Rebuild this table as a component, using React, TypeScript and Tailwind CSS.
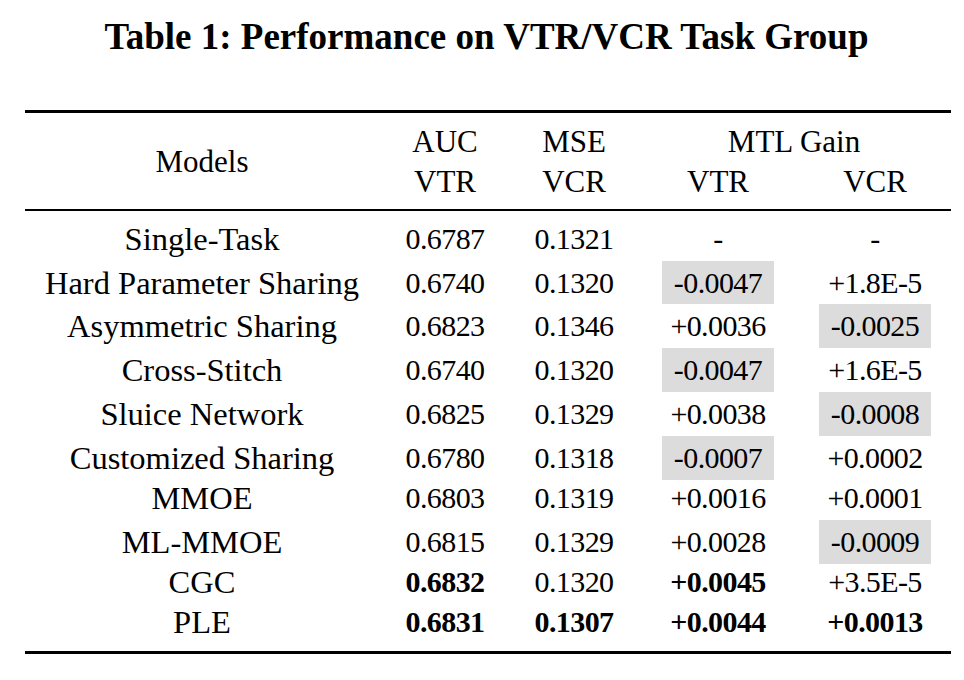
import React from "react";

type Row = {
  name: string;
  vals: string[];
  bold?: boolean[];
  shade?: boolean[];
  cls: string;
};

const rows: Row[] = [
  { name: "Single-Task", vals: ["0.6787", "0.1321", "-", "-"], cls: "h-[50px] pt-[6px]" },
  { name: "Hard Parameter Sharing", vals: ["0.6740", "0.1320", "-0.0047", "+1.8E-5"], shade: [false, false, true, false], cls: "h-[43px]" },
  { name: "Asymmetric Sharing", vals: ["0.6823", "0.1346", "+0.0036", "-0.0025"], shade: [false, false, false, true], cls: "h-[44px]" },
  { name: "Cross-Stitch", vals: ["0.6740", "0.1320", "-0.0047", "+1.6E-5"], shade: [false, false, true, false], cls: "h-[44px]" },
  { name: "Sluice Network", vals: ["0.6825", "0.1329", "+0.0038", "-0.0008"], shade: [false, false, false, true], cls: "h-[44px]" },
  { name: "Customized Sharing", vals: ["0.6780", "0.1318", "-0.0007", "+0.0002"], shade: [false, false, true, false], cls: "h-[44px]" },
  { name: "MMOE", vals: ["0.6803", "0.1319", "+0.0016", "+0.0001"], cls: "h-[40px] pb-[4px]" },
  { name: "ML-MMOE", vals: ["0.6815", "0.1329", "+0.0028", "-0.0009"], shade: [false, false, false, true], cls: "h-[44px]" },
  { name: "CGC", vals: ["0.6832", "0.1320", "+0.0045", "+3.5E-5"], bold: [true, false, true, false], cls: "h-[36px]" },
  { name: "PLE", vals: ["0.6831", "0.1307", "+0.0044", "+0.0013"], bold: [true, true, true, true], cls: "h-[44px]" },
];

const cols = "grid grid-cols-[354px_132px_126px_162px_152px]";

export default function App() {
  return (
    <div className="w-[964px] h-[680px] bg-white text-black font-['Liberation_Serif','Times_New_Roman',serif]">
      <div className="ml-[25px] w-[926px]">
        <h1 className="pt-[17px] h-[57px] leading-[40px] text-center text-[37px] font-bold pr-[3px]">
          Table 1: Performance on VTR/VCR Task Group
        </h1>
        <div className="mt-[53px] h-[3px] bg-black" />
        <div className={`${cols} grid-rows-[40px_40px] pt-[9px] text-[31px] leading-[34px]`}>
          <div className="row-span-2 flex items-center justify-center">Models</div>
          <div className="flex items-center justify-center">AUC</div>
          <div className="flex items-center justify-center">MSE</div>
          <div className="col-span-2 flex items-center justify-center">MTL Gain</div>
          <div className="flex items-center justify-center">VTR</div>
          <div className="flex items-center justify-center">VCR</div>
          <div className="flex items-center justify-center">VTR</div>
          <div className="flex items-center justify-center">VCR</div>
        </div>
        <div className="mt-[7px] h-[2px] bg-black" />
        {rows.map((r) => (
          <div key={r.name} className={`${cols} ${r.cls}`}>
            <div className="flex h-full items-center justify-center text-[32.5px] leading-[34px]">{r.name}</div>
            {r.vals.map((v, i) => {
              const b = r.bold?.[i];
              const s = r.shade?.[i];
              return (
                <div key={i} className="flex h-full items-center justify-center">
                  <span
                    className={`flex h-full items-center text-[30px] leading-[34px] tracking-[-0.6px] ${
                      b ? "font-bold" : ""
                    } ${s ? "bg-[#dcdcdc] px-[12px]" : ""}`}
                  >
                    {v}
                  </span>
                </div>
              );
            })}
          </div>
        ))}
        <div className="mt-[7px] h-[3px] bg-black" />
      </div>
    </div>
  );
}
